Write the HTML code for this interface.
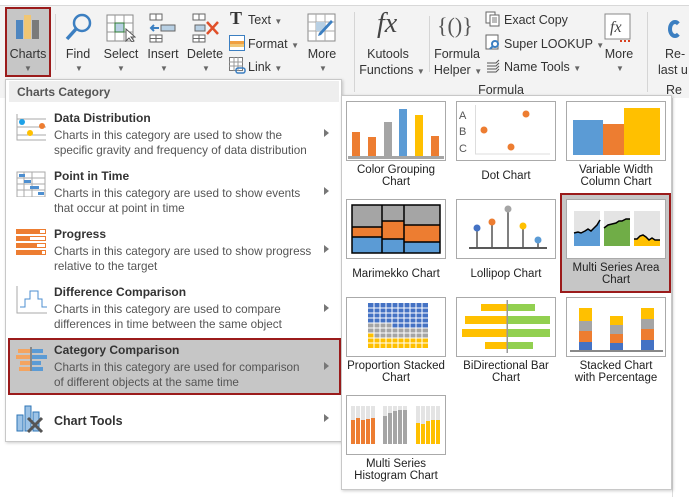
<!DOCTYPE html>
<html><head><meta charset="utf-8"><style>
*{margin:0;padding:0;box-sizing:border-box}
body{width:689px;height:497px;position:relative;overflow:hidden;background:#fff;font-family:"Liberation Sans",sans-serif;color:#222}
.a{position:absolute}
.rb{font-size:12.5px;color:#333;text-align:center;white-space:nowrap}
.car{font-size:8px;color:#666}
.sep{position:absolute;width:1px;background:#d5d5d5}
.it .t{position:absolute;left:54px;font-weight:bold;font-size:12px;color:#333}
.it .d{position:absolute;left:54px;font-size:11.7px;color:#555;line-height:15px;white-space:nowrap}
.arr{position:absolute;left:324px;width:0;height:0;border-left:5px solid #777;border-top:4px solid transparent;border-bottom:4px solid transparent}
.tile{position:absolute;width:100px;height:60px;border:1px solid #aaa;background:#fff}
.tile svg{position:absolute;left:0;top:0}
.lb{position:absolute;width:110px;text-align:center;font-size:11.5px;line-height:12px;color:#222}
</style></head><body>
<div class="a" style="left:0;top:0;width:689px;height:98px;background:#f3f3f3;border-top:5px solid #fff"></div>
<div class="a" style="left:0;top:5px;width:689px;height:1px;background:#d8d8d8"></div>
<div class="a" style="left:5px;top:7px;width:46px;height:70px;background:#c6c6c6;border:2px solid #9b1b1b"></div>
<svg class="a" style="left:14px;top:13px" width="28" height="26"><rect x="2" y="7" width="7" height="19" fill="#4e86c0"/><rect x="10" y="2" width="7" height="24" fill="#f0c674"/><rect x="18" y="7" width="7" height="19" fill="#7a7a7a"/></svg>
<div class="a rb" style="left:5px;top:47px;width:46px">Charts</div>
<div class="a car" style="left:24px;top:64px">▼</div>
<div class="sep" style="left:55px;top:14px;height:56px"></div>
<svg class="a" style="left:64px;top:12px" width="30" height="30"><circle cx="18" cy="11" r="8" fill="none" stroke="#3c7fc1" stroke-width="2.5"/><line x1="12" y1="17" x2="3" y2="27" stroke="#3c7fc1" stroke-width="3.5"/></svg>
<div class="a rb" style="left:62px;top:47px;width:32px">Find</div><div class="a car" style="left:75px;top:64px">▼</div>
<svg class="a" style="left:106px;top:14px" width="30" height="28"><rect x="1" y="1" width="26" height="26" fill="#fff" stroke="#888"/><path d="M1 9H27M1 18H27M9 1V27M18 1V27" stroke="#999"/><rect x="9" y="9" width="9" height="9" fill="#b8d0e4" stroke="#2e7d32"/><path d="M20 15l0 12 3-3 3 4 2-1-3-4 4 0z" fill="#fff" stroke="#555"/></svg>
<div class="a rb" style="left:102px;top:47px;width:38px">Select</div><div class="a car" style="left:117px;top:64px">▼</div>
<svg class="a" style="left:149px;top:13px" width="28" height="30"><path d="M1 1h12v6H1zM7 1v6" stroke="#666" fill="#fff"/><rect x="12" y="12" width="14" height="6" fill="#b8d0e4" stroke="#666"/><path d="M10 15H2M5 12l-3 3 3 3" stroke="#3c7fc1" stroke-width="2" fill="none"/><path d="M1 22h12v7H1zM7 22v7M1 25.5h12" stroke="#666" fill="#fff"/></svg>
<div class="a rb" style="left:144px;top:47px;width:38px">Insert</div><div class="a car" style="left:160px;top:64px">▼</div>
<svg class="a" style="left:192px;top:13px" width="30" height="30"><path d="M1 1h12v6H1zM7 1v6" stroke="#666" fill="#fff"/><rect x="3" y="12" width="10" height="6" fill="#b8d0e4" stroke="#666"/><path d="M15 9l11 12M26 9L15 21" stroke="#e0502a" stroke-width="2.5"/><path d="M1 22h12v7H1zM7 22v7M1 25.5h12" stroke="#666" fill="#fff"/></svg>
<div class="a rb" style="left:185px;top:47px;width:40px">Delete</div><div class="a car" style="left:202px;top:64px">▼</div>
<div class="a" style="left:230px;top:8px;font-family:'Liberation Serif',serif;font-weight:bold;font-size:18px;color:#333">T</div>
<div class="a rb" style="left:248px;top:13px">Text <span class="car">▼</span></div>
<svg class="a" style="left:229px;top:35px" width="16" height="16"><rect x="0.5" y="0.5" width="15" height="15" fill="#fff" stroke="#3c7fc1"/><rect x="1" y="6" width="14" height="3" fill="#f0a040"/><rect x="1" y="9" width="14" height="3" fill="#f0c674"/></svg>
<div class="a rb" style="left:248px;top:37px">Format <span class="car">▼</span></div>
<svg class="a" style="left:229px;top:57px" width="17" height="17"><rect x="0.5" y="0.5" width="13" height="13" fill="#fff" stroke="#777"/><path d="M5 0v14M9 0v14M0 5h14M0 9h14" stroke="#999"/><rect x="7" y="11" width="9" height="5" rx="2" fill="none" stroke="#3c7fc1" stroke-width="1.5"/></svg>
<div class="a rb" style="left:248px;top:60px">Link <span class="car">▼</span></div>
<svg class="a" style="left:307px;top:13px" width="30" height="30"><rect x="1" y="1" width="27" height="27" fill="#fff" stroke="#888"/><path d="M1 9H28M1 18H28M9 1V28M18 1V28" stroke="#aaa"/><rect x="9" y="9" width="9" height="9" fill="#b8d0e4"/><path d="M12 20l12-13 2 2-12 13-3 1z" fill="#3c7fc1"/></svg>
<div class="a rb" style="left:304px;top:47px;width:36px">More</div><div class="a car" style="left:319px;top:64px">▼</div>
<div class="sep" style="left:354px;top:12px;height:80px"></div>
<div class="a" style="left:377px;top:8px;font-family:'Liberation Serif',serif;font-style:italic;font-size:28px;color:#444">fx</div>
<div class="a rb" style="left:358px;top:47px;width:60px">Kutools</div>
<div class="a rb" style="left:358px;top:63px;width:68px">Functions <span class="car">▼</span></div>
<div class="sep" style="left:429px;top:16px;height:56px"></div>
<div class="a" style="left:437px;top:13px;font-size:22px;color:#555;font-family:'Liberation Serif',serif">{()}</div>
<div class="a rb" style="left:433px;top:47px;width:48px">Formula</div>
<div class="a rb" style="left:433px;top:63px;width:50px">Helper <span class="car">▼</span></div>
<svg class="a" style="left:485px;top:11px" width="16" height="16"><rect x="1" y="1" width="9" height="11" fill="#fff" stroke="#666"/><rect x="5" y="4" width="9" height="11" fill="#fff" stroke="#666"/><path d="M7 7h5M7 9h5M7 11h5" stroke="#777"/></svg>
<div class="a rb" style="left:504px;top:13px">Exact Copy</div>
<svg class="a" style="left:485px;top:34px" width="16" height="17"><rect x="1" y="1" width="12" height="14" fill="#fff" stroke="#666"/><circle cx="10" cy="10" r="3" fill="none" stroke="#3c7fc1" stroke-width="2"/><path d="M8 12l-3 3" stroke="#3c7fc1" stroke-width="2"/></svg>
<div class="a rb" style="left:504px;top:37px">Super LOOKUP <span class="car">▼</span></div>
<svg class="a" style="left:485px;top:57px" width="16" height="16"><path d="M2 6h9l3-3M2 9h9l3-3M2 12h9l3-3M2 15h9l3-3" stroke="#555" fill="none"/></svg>
<div class="a rb" style="left:504px;top:60px">Name Tools <span class="car">▼</span></div>
<div class="a rb" style="left:478px;top:83px;width:46px">Formula</div>
<svg class="a" style="left:604px;top:13px" width="30" height="30"><rect x="1" y="1" width="25" height="25" fill="#fff" stroke="#888"/><text x="6" y="19" font-family="Liberation Serif" font-style="italic" font-size="16" fill="#444">fx</text><path d="M16 28h2M20 28h2M24 28h2" stroke="#d84020" stroke-width="2"/></svg>
<div class="a rb" style="left:601px;top:47px;width:36px">More</div><div class="a car" style="left:616px;top:64px">▼</div>
<div class="sep" style="left:647px;top:12px;height:80px"></div>
<div class="a" style="left:668px;top:20px;width:14px;height:18px;border:4px solid #3c7fc1;border-right-color:transparent;border-radius:50%"></div>
<div class="a rb" style="left:665px;top:47px">Re-</div>
<div class="a rb" style="left:658px;top:63px">last u</div>
<div class="a rb" style="left:666px;top:83px">Re</div>
<div class="a" style="left:672px;top:98px;width:17px;height:399px;background:#fff;border-left:1px solid #ddd"></div>
<!-- left menu -->
<div class="a" style="left:5px;top:79px;width:337px;height:363px;background:#fff;border:1px solid #c8c8c8;box-shadow:1px 1px 3px rgba(0,0,0,.2)"></div>
<div class="a" style="left:9px;top:81px;width:330px;height:21px;background:#eeeeee"></div>
<div class="a" style="left:17px;top:85px;font-size:12px;font-weight:bold;color:#555">Charts Category</div>
<div class="it">
<svg class="a" style="left:16px;top:114px" width="30" height="28"><path d="M1 0v26H30M1 5h29M1 13h29M1 21h29" stroke="#aaa" fill="none"/><circle cx="6" cy="8" r="3" fill="#1da1e8"/><circle cx="26" cy="12" r="3" fill="#ed7d31"/><circle cx="14" cy="19" r="3" fill="#ffc000"/></svg>
<div class="t" style="top:111px">Data Distribution</div>
<div class="d" style="top:128px">Charts in this category are used to show the<br>specific gravity and frequency of data distribution</div>
<div class="arr" style="top:129px"></div>
<svg class="a" style="left:16px;top:171px" width="30" height="26"><path d="M1 1h28v25H1zM1 7h28M1 13h28M1 19h28M8 1v25M16 1v25" stroke="#aaa" fill="none"/><rect x="3" y="3" width="6" height="3" fill="#4e8fd0"/><rect x="8" y="9" width="7" height="3" fill="#4e8fd0"/><rect x="14" y="15" width="9" height="3" fill="#4e8fd0"/><rect x="22" y="21" width="6" height="3" fill="#4e8fd0"/></svg>
<div class="t" style="top:169px">Point in Time</div>
<div class="d" style="top:186px">Charts in this category are used to show events<br>that occur at point in time</div>
<div class="arr" style="top:187px"></div>
<svg class="a" style="left:16px;top:229px" width="30" height="27"><g fill="#ed7d31"><rect y="0" width="30" height="5"/><rect y="7" width="30" height="5"/><rect y="14" width="30" height="5"/><rect y="21" width="30" height="5"/></g><g fill="#fff"><rect x="24" y="1" width="5" height="3"/><rect x="14" y="8" width="15" height="3"/><rect x="21" y="15" width="8" height="3"/><rect x="26" y="22" width="3" height="3"/></g></svg>
<div class="t" style="top:227px">Progress</div>
<div class="d" style="top:244px">Charts in this category are used to show progress<br>relative to the target</div>
<div class="arr" style="top:245px"></div>
<svg class="a" style="left:16px;top:286px" width="32" height="28"><path d="M1 0v27H31" stroke="#aaa" fill="none"/><path d="M4 21h5v-8h5V5h8v8h4v8h5" stroke="#4e8fd0" fill="none"/></svg>
<div class="t" style="top:285px">Difference Comparison</div>
<div class="d" style="top:302px">Charts in this category are used to compare<br>differences in time between the same object</div>
<div class="arr" style="top:304px"></div>
<div class="a" style="left:8px;top:338px;width:333px;height:57px;background:#c6c6c6;border:2px solid #9b1b1b"></div>
<svg class="a" style="left:16px;top:347px" width="32" height="24"><g fill="#f4a460"><rect x="2" y="2" width="13" height="4"/><rect x="0" y="8" width="15" height="4"/><rect x="4" y="14" width="11" height="4"/><rect x="3" y="20" width="12" height="4"/></g><g fill="#5b9bd5"><rect x="15" y="2" width="12" height="4"/><rect x="15" y="8" width="16" height="4"/><rect x="15" y="14" width="10" height="4"/><rect x="15" y="20" width="12" height="4"/></g><rect x="14" y="0" width="2" height="24" fill="#888"/></svg>
<div class="t" style="top:343px">Category Comparison</div>
<div class="d" style="top:360px">Charts in this category are used for comparison<br>of different objects at the same time</div>
<div class="arr" style="top:362px"></div>
<svg class="a" style="left:16px;top:404px" width="30" height="30"><rect x="1" y="11" width="6" height="16" fill="#9dc3e6" stroke="#2e75b6"/><rect x="9" y="2" width="6" height="25" fill="#9dc3e6" stroke="#2e75b6"/><rect x="17" y="8" width="6" height="19" fill="#9dc3e6" stroke="#2e75b6"/><path d="M12 14l14 14M26 14L12 28" stroke="#555" stroke-width="3"/></svg>
<div class="t" style="top:414px;font-size:12.5px">Chart Tools</div>
<div class="arr" style="top:414px"></div>
</div>
<!-- right panel -->
<div class="a" style="left:341px;top:95px;width:331px;height:395px;background:#fff;border:1px solid #c8c8c8;box-shadow:1px 1px 3px rgba(0,0,0,.2)"></div>
<div class="a" style="left:560px;top:193px;width:111px;height:100px;background:#c6c6c6;border:2px solid #9b1b1b"></div>

<!-- row 1 -->
<div class="tile" style="left:346px;top:101px"><svg width="98" height="58">
<rect x="5" y="30" width="8" height="24" fill="#ed7d31"/><rect x="21" y="35" width="8" height="19" fill="#ed7d31"/><rect x="37" y="20" width="8" height="34" fill="#a5a5a5"/><rect x="52" y="7" width="8" height="47" fill="#5b9bd5"/><rect x="68" y="13" width="8" height="41" fill="#ffc000"/><rect x="84" y="34" width="8" height="20" fill="#ed7d31"/><rect x="1" y="54" width="96" height="3" fill="#a5a5a5"/></svg></div>
<div class="lb" style="left:341px;top:164px">Color Grouping<br>Chart</div>

<div class="tile" style="left:456px;top:101px"><svg width="98" height="58">
<text x="2" y="17" font-size="11" fill="#555" font-family="Liberation Sans">A</text><text x="2" y="33" font-size="11" fill="#555" font-family="Liberation Sans">B</text><text x="2" y="50" font-size="11" fill="#555" font-family="Liberation Sans">C</text>
<path d="M18.5 3V52H93" stroke="#ddd" fill="none"/>
<circle cx="69" cy="12" r="3.5" fill="#ed7d31"/><circle cx="27" cy="28" r="3.5" fill="#ed7d31"/><circle cx="54" cy="45" r="3.5" fill="#ed7d31"/></svg></div>
<div class="lb" style="left:451px;top:170px">Dot Chart</div>

<div class="tile" style="left:566px;top:101px"><svg width="98" height="58">
<rect x="6" y="18" width="30" height="35" fill="#5b9bd5"/><rect x="36" y="22" width="21" height="31" fill="#ed7d31"/><rect x="57" y="6" width="36" height="47" fill="#ffc000"/></svg></div>
<div class="lb" style="left:561px;top:164px">Variable Width<br>Column Chart</div>

<!-- row 2 -->
<div class="tile" style="left:346px;top:199px"><svg width="98" height="58">
<rect x="5" y="5" width="30" height="22" fill="#a5a5a5"/><rect x="5" y="27" width="30" height="10" fill="#ed7d31"/><rect x="5" y="37" width="30" height="16" fill="#5b9bd5"/>
<rect x="35" y="5" width="22" height="16" fill="#a5a5a5"/><rect x="35" y="21" width="22" height="18" fill="#ed7d31"/><rect x="35" y="39" width="22" height="14" fill="#5b9bd5"/>
<rect x="57" y="5" width="36" height="20" fill="#a5a5a5"/><rect x="57" y="25" width="36" height="17" fill="#ed7d31"/><rect x="57" y="42" width="36" height="11" fill="#5b9bd5"/>
<path d="M5 5h88v48H5zM35 5v48M57 5v48M5 27h30M5 37h30M35 21h22M35 39h22M57 25h36M57 42h36" stroke="#000" stroke-width="1.5" fill="none"/></svg></div>
<div class="lb" style="left:341px;top:268px">Marimekko Chart</div>

<div class="tile" style="left:456px;top:199px"><svg width="98" height="58">
<path d="M12 48H90" stroke="#222" stroke-width="1.5"/>
<path d="M20 28V48M35 22V48M51 9V48M66 26V48M81 40V48" stroke="#555" stroke-width="1.5"/>
<circle cx="20" cy="28" r="3.5" fill="#4472c4"/><circle cx="35" cy="22" r="3.5" fill="#ed7d31"/><circle cx="51" cy="9" r="3.5" fill="#a5a5a5"/><circle cx="66" cy="26" r="3.5" fill="#ffc000"/><circle cx="81" cy="40" r="3.5" fill="#5b9bd5"/></svg></div>
<div class="lb" style="left:451px;top:268px">Lollipop Chart</div>

<div class="tile" style="left:566px;top:199px"><svg width="98" height="58">
<rect x="7" y="11" width="26" height="35" fill="#e4e4e4"/><rect x="37" y="11" width="26" height="35" fill="#e4e4e4"/><rect x="67" y="11" width="26" height="35" fill="#e4e4e4"/>
<path d="M7 33L11 32 14 33 18 31 21 29 24 31 27 28 30 25 33 20V46H7z" fill="#5b9bd5"/>
<path d="M7 33L11 32 14 33 18 31 21 29 24 31 27 28 30 25 33 20" stroke="#000" stroke-width="1.5" fill="none"/>
<path d="M37 28L41 25 45 24 49 23 52 21 55 21 59 19 63 19V46H37z" fill="#70ad47"/>
<path d="M37 28L41 25 45 24 49 23 52 21 55 21 59 19 63 19" stroke="#000" stroke-width="1.5" fill="none"/>
<path d="M67 39L70 39 73 36 76 35 79 37 82 40 85 38 88 40 93 40V46H67z" fill="#ffc000"/>
<path d="M67 39L70 39 73 36 76 35 79 37 82 40 85 38 88 40 93 40" stroke="#000" stroke-width="1.5" fill="none"/></svg></div>
<div class="lb" style="left:561px;top:262px">Multi Series Area<br>Chart</div>

<!-- row 3 -->
<div class="tile" style="left:346px;top:297px"><svg width="98" height="58">
<rect x="21" y="5" width="60" height="25" fill="#4472c4"/>
<rect x="21" y="25" width="24" height="5" fill="#a5a5a5"/>
<rect x="21" y="30" width="60" height="10" fill="#a5a5a5"/>
<rect x="21" y="35" width="6" height="5" fill="#ffc000"/>
<rect x="21" y="40" width="60" height="10" fill="#ffc000"/>
<path d="M21 10H81M21 15H81M21 20H81M21 25H81M21 30H81M21 35H81M21 40H81M21 45H81M27 5V50M33 5V50M39 5V50M45 5V50M51 5V50M57 5V50M63 5V50M69 5V50M75 5V50" stroke="#fff" stroke-width="1"/></svg></div>
<div class="lb" style="left:341px;top:360px">Proportion Stacked<br>Chart</div>

<div class="tile" style="left:456px;top:297px"><svg width="98" height="58">
<rect x="24" y="6" width="26" height="7" fill="#ffc000"/><rect x="50" y="6" width="28" height="7" fill="#92d050"/>
<rect x="8" y="18" width="42" height="8" fill="#ffc000"/><rect x="50" y="18" width="43" height="8" fill="#92d050"/>
<rect x="5" y="31" width="45" height="8" fill="#ffc000"/><rect x="50" y="31" width="43" height="8" fill="#92d050"/>
<rect x="28" y="44" width="22" height="7" fill="#ffc000"/><rect x="50" y="44" width="26" height="7" fill="#92d050"/>
<rect x="49.5" y="2" width="1.5" height="53" fill="#999"/></svg></div>
<div class="lb" style="left:451px;top:360px">BiDirectional Bar<br>Chart</div>

<div class="tile" style="left:566px;top:297px"><svg width="98" height="58">
<rect x="12" y="10" width="13" height="13" fill="#ffc000"/><rect x="12" y="23" width="13" height="10" fill="#a5a5a5"/><rect x="12" y="33" width="13" height="11" fill="#ed7d31"/><rect x="12" y="44" width="13" height="8" fill="#4472c4"/>
<rect x="43" y="18" width="13" height="9" fill="#ffc000"/><rect x="43" y="27" width="13" height="9" fill="#a5a5a5"/><rect x="43" y="36" width="13" height="9" fill="#ed7d31"/><rect x="43" y="45" width="13" height="7" fill="#4472c4"/>
<rect x="74" y="10" width="13" height="11" fill="#ffc000"/><rect x="74" y="21" width="13" height="10" fill="#a5a5a5"/><rect x="74" y="31" width="13" height="11" fill="#ed7d31"/><rect x="74" y="42" width="13" height="10" fill="#4472c4"/>
<rect x="3" y="52" width="93" height="2" fill="#888"/></svg></div>
<div class="lb" style="left:561px;top:360px">Stacked Chart<br>with Percentage</div>

<!-- row 4 -->
<div class="tile" style="left:346px;top:395px"><svg width="98" height="58">
<g fill="#e4e4e4"><rect x="4" y="10" width="4" height="38"/><rect x="9" y="10" width="4" height="38"/><rect x="14" y="10" width="4" height="38"/><rect x="19" y="10" width="4" height="38"/><rect x="24" y="10" width="4" height="38"/>
<rect x="36" y="10" width="4" height="38"/><rect x="41" y="10" width="4" height="38"/><rect x="46" y="10" width="4" height="38"/><rect x="51" y="10" width="4" height="38"/><rect x="56" y="10" width="4" height="38"/>
<rect x="69" y="10" width="4" height="38"/><rect x="74" y="10" width="4" height="38"/><rect x="79" y="10" width="4" height="38"/><rect x="84" y="10" width="4" height="38"/><rect x="89" y="10" width="4" height="38"/></g>
<g fill="#ed7d31"><rect x="4" y="24" width="4" height="24"/><rect x="9" y="22" width="4" height="26"/><rect x="14" y="24" width="4" height="24"/><rect x="19" y="23" width="4" height="25"/><rect x="24" y="22" width="4" height="26"/></g>
<g fill="#a5a5a5"><rect x="36" y="20" width="4" height="28"/><rect x="41" y="17" width="4" height="31"/><rect x="46" y="15" width="4" height="33"/><rect x="51" y="14" width="4" height="34"/><rect x="56" y="14" width="4" height="34"/></g>
<g fill="#ffc000"><rect x="69" y="27" width="4" height="21"/><rect x="74" y="28" width="4" height="20"/><rect x="79" y="25" width="4" height="23"/><rect x="84" y="24" width="4" height="24"/><rect x="89" y="24" width="4" height="24"/></g></svg></div>
<div class="lb" style="left:341px;top:458px">Multi Series<br>Histogram Chart</div>
</body></html>
